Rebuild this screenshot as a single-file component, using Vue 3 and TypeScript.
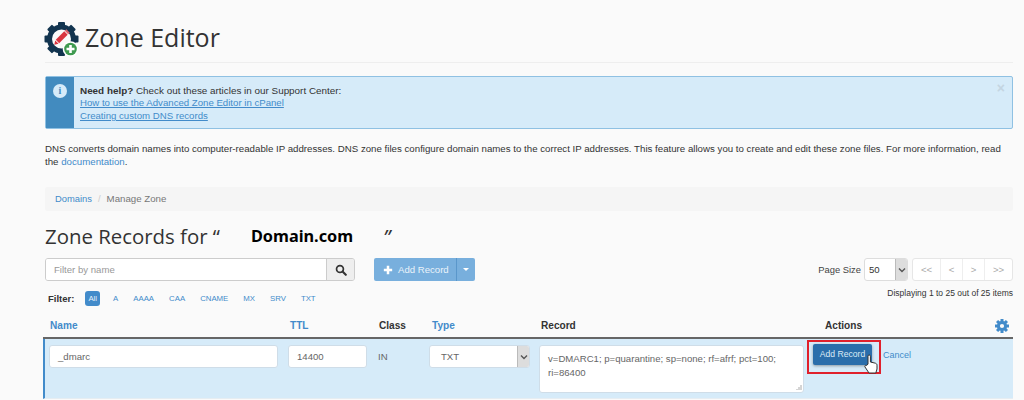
<script setup lang="ts">
const filters: string[] = ['All', 'A', 'AAAA', 'CAA', 'CNAME', 'MX', 'SRV', 'TXT']
const pages: string[] = ['<<', '<', '>', '>>']
const teeth: number[] = [0, 45, 90, 135, 180, 225, 270, 315]
</script>

<template>
  <div class="page">
    <header class="head">
      <svg class="logo" width="36" height="36" viewBox="0 0 36 36">
        <g transform="translate(17.5 17)">
          <rect v-for="t in teeth" :key="t" x="-3.5" y="-17" width="7" height="7" rx="1" fill="#12344f" :transform="`rotate(${t})`" />
          <circle r="12" fill="none" stroke="#12344f" stroke-width="5" />
        </g>
        <g transform="translate(17 16) rotate(45)">
          <rect x="-2.4" y="-7" width="4.8" height="12" fill="#d9343f" />
          <rect x="-2.4" y="-10" width="4.8" height="2.2" fill="#e0606a" />
          <path d="M-2.4 5.8H2.4L0 9.5Z" fill="#d9343f" />
        </g>
        <circle cx="26.5" cy="27" r="7.8" fill="#fff" />
        <circle cx="26.5" cy="27" r="6.3" fill="#3f9a50" />
        <path d="M26.5 23v8M22.5 27h8" stroke="#fff" stroke-width="2.6" />
      </svg>
      <h1>Zone Editor</h1>
    </header>

    <div class="alert">
      <div class="alert-side">
        <span class="info">i</span>
      </div>
      <div class="alert-body">
        <div><b>Need help?</b> Check out these articles in our Support Center:</div>
        <a>How to use the Advanced Zone Editor in cPanel</a>
        <a>Creating custom DNS records</a>
      </div>
      <span class="close">×</span>
    </div>

    <p class="intro">DNS converts domain names into computer-readable IP addresses. DNS zone files configure domain names to the correct IP addresses. This feature allows you to create and edit these zone files. For more information, read the <a>documentation</a>.</p>

    <nav class="crumbs"><a>Domains</a><span class="sep">/</span><span class="cur">Manage Zone</span></nav>

    <h2>Zone Records for “<strong>Domain.com</strong><em>”</em></h2>

    <div class="controls">
      <div class="search">
        <div class="search-input">Filter by name</div>
        <div class="search-btn">
          <svg width="12" height="12" viewBox="0 0 14 14"><circle cx="5.8" cy="5.8" r="4" fill="none" stroke="#333" stroke-width="2" /><path d="M8.8 8.8l3.8 3.8" stroke="#333" stroke-width="2.4" stroke-linecap="round" /></svg>
        </div>
      </div>
      <div class="add">
        <div class="add-main">
          <svg width="10" height="10" viewBox="0 0 12 12"><path d="M6 1v10M1 6h10" stroke="#fff" stroke-width="3" /></svg>
          Add Record
        </div>
        <div class="add-caret"><i></i></div>
      </div>
      <div class="paging">
        <div class="paging-row">
          <span class="ps-label">Page Size</span>
          <div class="ps-select">
            <span>50</span>
            <span class="sel-arrow"><svg width="8" height="6" viewBox="0 0 8 6"><path d="M1 1.5l3 3 3-3" fill="none" stroke="#555" stroke-width="1.4" /></svg></span>
          </div>
          <div class="pager"><span v-for="p in pages" :key="p">{{ p }}</span></div>
        </div>
        <div class="displaying">Displaying 1 to 25 out of 25 items</div>
      </div>
    </div>

    <div class="filter">
      <b>Filter:</b>
      <span v-for="f in filters" :key="f" class="chip" :class="{ on: f === 'All' }">{{ f }}</span>
    </div>

    <div class="thead">
      <span class="link">Name</span>
      <span class="link">TTL</span>
      <span>Class</span>
      <span class="link">Type</span>
      <span>Record</span>
      <span class="act-head">Actions
        <svg width="14" height="14" viewBox="0 0 14 14"><g transform="translate(7 7)" fill="#428bca"><rect v-for="t in teeth" :key="t" x="-1.5" y="-7" width="3" height="3" :transform="`rotate(${t})`" /></g><circle cx="7" cy="7" r="3.6" fill="none" stroke="#428bca" stroke-width="3" /></svg>
      </span>
    </div>

    <div class="row">
      <div class="field">_dmarc</div>
      <div class="field">14400</div>
      <span class="cls">IN</span>
      <div class="field sel">
        <span>TXT</span>
        <span class="sel-arrow"><svg width="8" height="6" viewBox="0 0 8 6"><path d="M1 1.5l3 3 3-3" fill="none" stroke="#555" stroke-width="1.4" /></svg></span>
      </div>
      <div class="area">v=DMARC1; p=quarantine; sp=none; rf=afrf; pct=100; ri=86400
        <svg class="grip" width="7" height="7" viewBox="0 0 7 7"><path d="M6 1v5M4 3v3M2 5v1" stroke="#aaa" stroke-width="1" /></svg>
      </div>
      <div class="actions">
        <div class="hl">
          <div class="save">Add Record</div>
          <svg class="hand" width="14" height="20" viewBox="0 0 14 20"><path d="M4 10V2.2a1.2 1.2 0 0 1 2.4 0V8l5 1.2c1 .3 1.6 1 1.6 2V15l-1.2 4H5L1 13c-.7-1 .6-2.4 1.8-1.6z" fill="#fff" stroke="#333" stroke-width="1" /></svg>
        </div>
        <a>Cancel</a>
      </div>
    </div>
  </div>
</template>

<style>
html, body { margin: 0; background: #fafafa; }
</style>

<style scoped>
.page {
  width: 1024px;
  height: 400px;
  overflow: hidden;
  box-sizing: border-box;
  padding: 0 11px 0 45px;
  background: #fafafa;
  color: #333;
  font: 9.7px/13px "Liberation Sans", Arial, sans-serif;
}
a { color: #428bca; }
.head {
  display: flex;
  align-items: center;
  gap: 5px;
  height: 40px;
  padding-top: 22px;
  border-bottom: 1px solid #eee;
}
.logo { flex: none; margin-top: -5px; margin-left: -1px; }
h1 {
  margin: -10px 0 0;
  font: 400 25px/36px "Open Sans", sans-serif;
  color: #333;
}
.alert {
  position: relative;
  display: flex;
  margin-top: 13px;
  height: 53px;
  box-sizing: border-box;
  background: #d6ebf9;
  border: 1px solid #8fc1e3;
  border-radius: 2px;
}
.alert-side {
  width: 28px;
  background: #428bbf;
  display: flex;
  justify-content: center;
  padding-top: 7px;
  box-sizing: border-box;
}
.info {
  width: 14px;
  height: 14px;
  border-radius: 50%;
  background: #d6ebf9;
  color: #428bbf;
  font: 700 10px/14px "Liberation Serif", serif;
  text-align: center;
}
.alert-body {
  padding: 8px 0 0 6px;
  font-size: 9.9px;
  line-height: 12.3px;
  display: flex;
  flex-direction: column;
}
.alert-body a { text-decoration: underline; font-size: 9.65px; }
.close {
  position: absolute;
  right: 7px;
  top: 3px;
  font: 700 14px/16px "Liberation Sans", sans-serif;
  color: #c4d5e2;
}
.intro {
  margin: 13px 0 0;
  line-height: 13px;
}
.crumbs {
  margin-top: 19px;
  height: 24px;
  line-height: 24px;
  padding-left: 10px;
  background: #f5f5f5;
  border-radius: 3px;
  font-size: 9.4px;
}
.sep { color: #ccc; padding: 0 6px; }
.cur { color: #777; font-size: 9.7px; }
h2 {
  margin: 11px 0 0;
  font: 400 20.4px/28px "Open Sans", sans-serif;
  color: #333;
  display: flex;
  align-items: center;
}
h2 strong {
  font: 700 16.3px/28px "Noto Sans", sans-serif;
  color: #000;
  margin-left: 31px;
}
h2 em { margin-left: 30px; }
.controls {
  display: flex;
  align-items: flex-start;
  margin-top: 8px;
  height: 38px;
}
.search {
  display: flex;
  width: 310px;
  height: 23px;
  box-sizing: border-box;
  border: 1px solid #ccc;
  border-radius: 3px;
  overflow: hidden;
}
.search-input {
  flex: 1;
  background: #fff;
  color: #999;
  font-size: 9.6px;
  line-height: 21px;
  padding-left: 8px;
}
.search-btn {
  width: 27px;
  background: #eee;
  border-left: 1px solid #ccc;
  display: flex;
  align-items: center;
  justify-content: center;
}
.add {
  display: flex;
  margin-left: 19px;
  height: 23px;
  width: 101px;
  color: #eaf3fa;
  background: #78afdd;
  border-radius: 2px;
  font-size: 9.6px;
}
.add-main {
  width: 83px;
  box-sizing: border-box;
  display: flex;
  align-items: center;
  gap: 5px;
  padding-left: 9px;
  border-right: 1px solid #5a97cb;
}
.add-caret {
  width: 17px;
  display: flex;
  align-items: center;
  justify-content: center;
}
.add-caret i {
  border: 3px solid transparent;
  border-top-color: #fff;
  border-bottom: 0;
}
.paging { margin-left: auto; text-align: right; }
.paging-row { display: flex; align-items: center; }
.ps-label { color: #444; font-size: 9.4px; margin-right: 3px; }
.ps-select {
  display: flex;
  justify-content: space-between;
  width: 44px;
  height: 23px;
  box-sizing: border-box;
  border: 1px solid #ddd;
  border-radius: 3px;
  background: #fff;
  font-size: 9.6px;
  line-height: 21px;
  padding-left: 4px;
  margin-right: 4px;
  overflow: hidden;
}
.sel-arrow {
  width: 11px;
  background: #ddd;
  border-left: 1px solid #bbb;
  display: flex;
  align-items: center;
  justify-content: center;
}
.pager {
  display: flex;
  border: 1px solid #e6e6e6;
  border-radius: 3px;
  background: #fff;
  height: 23px;
  box-sizing: border-box;
  color: #aaa;
  font-size: 9.6px;
  line-height: 21px;
  text-align: center;
}
.pager span { width: 27px; }
.pager span:nth-child(2), .pager span:nth-child(3) { width: 21px; border-left: 1px solid #eee; }
.pager span:nth-child(4) { border-left: 1px solid #eee; }
.displaying {
  font-size: 8.5px;
  line-height: 11px;
  margin-top: 7px;
  color: #333;
}
.filter {
  display: flex;
  align-items: center;
  margin-top: -6px;
  height: 16px;
  padding-left: 3px;
  font-size: 7.8px;
  color: #428bca;
}
.filter b { color: #333; font-size: 9.5px; margin-right: 11px; }
.chip { margin-right: 15px; }
.chip.on {
  background: #428bca;
  color: #e6f1fa;
  padding: 0 3px;
  border-radius: 3px;
  line-height: 15px;
  margin-right: 13px;
}
.thead {
  display: grid;
  grid-template-columns: 240px 89px 53px 109px 278px 1fr;
  margin: 13px 0 0 -2px;
  height: 20px;
  box-sizing: border-box;
  border-bottom: 2px solid #666;
  padding-left: 7px;
  font-size: 10.1px;
  font-weight: 700;
  color: #333;
  line-height: 14px;
}
.link { color: #428bca; }
.act-head { display: flex; justify-content: space-between; padding: 0 4px 0 6px; }
.row {
  display: grid;
  grid-template-columns: 239px 90px 51px 110px 268px 1fr;
  margin-left: -2px;
  height: 60px;
  box-sizing: border-box;
  background: #d6ebf9;
  border-left: 2px solid #428bca;
  border-bottom: 1px solid #e6edf2;
  padding: 6px 0 0 4px;
  align-items: start;
  color: #666;
  font-size: 9.6px;
}
.field {
  box-sizing: border-box;
  width: 229px;
  height: 23px;
  background: #fff;
  border: 1px solid #cfdde8;
  border-radius: 3px;
  line-height: 21px;
  padding-left: 8px;
}
.field:nth-child(2) { width: 79px; }
.cls { line-height: 23px; }
.sel {
  width: 101px;
  display: flex;
  justify-content: space-between;
  padding-left: 11px;
  overflow: hidden;
}
.sel .sel-arrow { width: 11px; }
.area {
  position: relative;
  box-sizing: border-box;
  width: 265px;
  height: 48px;
  background: #fff;
  border: 1px solid #cfdde8;
  border-radius: 3px;
  padding: 6px 8px;
  line-height: 14px;
}
.grip { position: absolute; right: 1px; bottom: 1px; }
.actions {
  display: flex;
  align-items: flex-start;
  margin-top: -5px;
  gap: 2px;
}
.hl {
  position: relative;
  border: 2px solid #e0202c;
  padding: 2px 7px 7px 4px;
}
.save {
  width: 59px;
  height: 21px;
  background: #2a6eab;
  color: #dceaf5;
  font-size: 8.6px;
  line-height: 21px;
  text-align: center;
  border-radius: 2px;
  box-shadow: 0 1px 3px rgba(0, 0, 0, .35);
}
.hand { position: absolute; left: 55px; top: 12px; }
.actions a { font-size: 9px; margin-top: 9px; }
</style>
